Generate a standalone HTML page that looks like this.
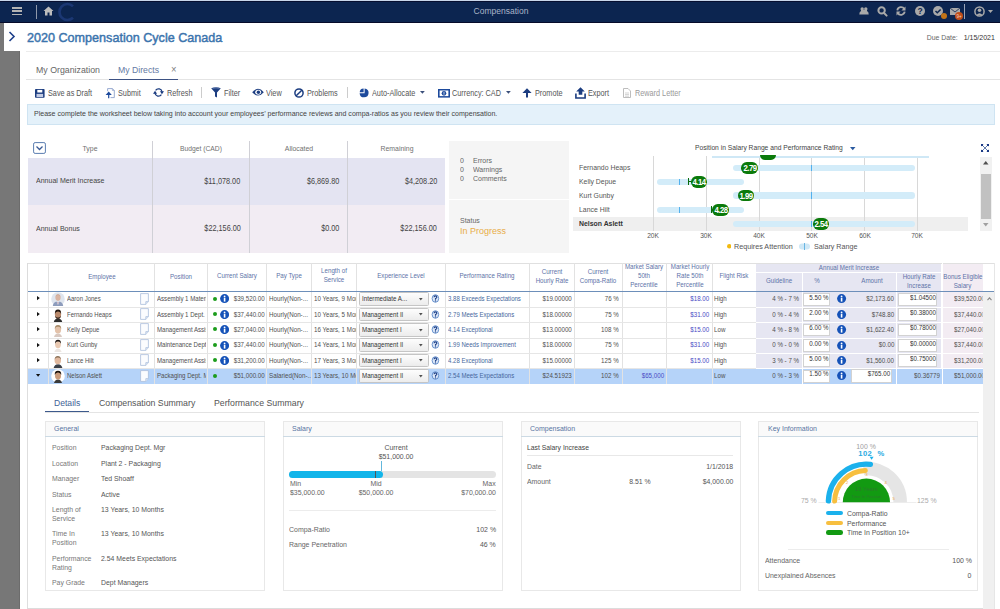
<!DOCTYPE html>
<html><head><meta charset="utf-8"><style>
html,body{margin:0;padding:0;}
body{width:1000px;height:609px;overflow:hidden;position:relative;background:#fff;font-family:"Liberation Sans",sans-serif;}
.t{position:absolute;white-space:nowrap;-webkit-font-smoothing:antialiased;}
.r{position:absolute;}
</style></head><body>
<div class="r" style="left:0.00px;top:0.00px;width:1000.00px;height:1.00px;background:#c9d6ea;"></div>
<div class="r" style="left:0.00px;top:1.00px;width:1000.00px;height:22.00px;background:#0c2550;"></div>
<div class="r" style="left:0.00px;top:1.00px;width:1000.00px;height:1.00px;background:#070f30;"></div>
<div class="r" style="left:0.00px;top:22.00px;width:1000.00px;height:1.00px;background:#060c2a;"></div>
<div class="r" style="left:12.00px;top:7.00px;width:10.00px;height:1.50px;background:#b4b4b4;"></div>
<div class="r" style="left:12.00px;top:10.30px;width:10.00px;height:1.50px;background:#b4b4b4;"></div>
<div class="r" style="left:12.00px;top:13.60px;width:10.00px;height:1.50px;background:#b4b4b4;"></div>
<div class="r" style="left:36.00px;top:4.50px;width:1.00px;height:14.00px;background:#8f98aa;"></div>
<svg class="r" style="left:43px;top:6px;width:11px;height:10px" viewBox="0 0 11 10"><path d="M5.5 0.5 L0.5 5 H2 V9.5 H4.5 V6.5 H6.5 V9.5 H9 V5 H10.5 Z" fill="#bdbdbd"/></svg>
<svg class="r" style="left:57px;top:2px;width:20px;height:20px" viewBox="0 0 20 20"><path d="M16 4.2 A8 8 0 1 0 16 15.8" fill="none" stroke="#1b3773" stroke-width="2.7"/></svg>
<div class="t" style="top:6.00px;font-size:9.520px;line-height:10px;color:#a9b4c8;left:350.60px;width:300px;text-align:center;transform:scaleX(0.8929);transform-origin:50% 0;">Compensation</div>
<svg class="r" style="left:859px;top:7px;width:10px;height:8px" viewBox="0 0 10 8"><circle cx="3.2" cy="2" r="1.7" fill="#a9a9a9"/><circle cx="6.8" cy="2" r="1.7" fill="#a9a9a9"/><path d="M0.3 7.6 Q0.2 4.6 2 4 H8 Q9.8 4.6 9.7 7.6 Z" fill="#a9a9a9"/><rect x="2" y="3" width="6" height="2" fill="#a9a9a9"/></svg>
<svg class="r" style="left:877px;top:6px;width:11px;height:11px" viewBox="0 0 11 11"><circle cx="4.6" cy="4.4" r="3.2" fill="none" stroke="#a9a9a9" stroke-width="2"/><path d="M6.8 6.8 L9.6 9.6" stroke="#a9a9a9" stroke-width="2" stroke-linecap="round"/></svg>
<svg class="r" style="left:896px;top:6px;width:10px;height:10px" viewBox="0 0 10 10"><path d="M1.3 4.3 A3.8 3.8 0 0 1 8.3 3" fill="none" stroke="#a9a9a9" stroke-width="1.8"/><path d="M9.5 0.5 V4.6 H5.4 Z" fill="#a9a9a9"/><path d="M8.7 5.7 A3.8 3.8 0 0 1 1.7 7" fill="none" stroke="#a9a9a9" stroke-width="1.8"/><path d="M0.5 9.5 V5.4 H4.6 Z" fill="#a9a9a9"/></svg>
<svg class="r" style="left:915px;top:6px;width:10px;height:10px" viewBox="0 0 10 10"><circle cx="5" cy="5" r="5" fill="#a9a9a9"/><text x="5" y="8.3" font-size="8.5" font-weight="700" text-anchor="middle" fill="#0c2550" font-family="Liberation Sans">?</text></svg>
<svg class="r" style="left:933px;top:6px;width:10px;height:10px" viewBox="0 0 10 10"><circle cx="5" cy="5" r="5" fill="#a9a9a9"/><path d="M2.5 5 L4.3 6.8 L7.6 3.4" fill="none" stroke="#0c2550" stroke-width="1.5"/></svg>
<svg class="r" style="left:940.5px;top:12.5px;width:6px;height:6px" viewBox="0 0 6 6"><circle cx="3" cy="3" r="3" fill="#c27418"/></svg>
<svg class="r" style="left:950px;top:8px;width:10px;height:7px" viewBox="0 0 10 7"><rect x="0" y="0" width="10" height="7" fill="#a9a9a9"/><path d="M0 0 L5 4 L10 0" fill="none" stroke="#0c2550" stroke-width="0.8"/></svg>
<svg class="r" style="left:955px;top:12px;width:8px;height:8px" viewBox="0 0 8 8"><circle cx="4" cy="4" r="4" fill="#bf4d1a"/><text x="4" y="5.8" font-size="4.5" text-anchor="middle" fill="#f0d0c0" font-family="Liberation Sans">9+</text></svg>
<div class="r" style="left:964.00px;top:4.00px;width:1.00px;height:15.00px;background:#9aa3b5;"></div>
<svg class="r" style="left:973.5px;top:6px;width:11px;height:11px" viewBox="0 0 11 11"><circle cx="5.5" cy="5.5" r="4.6" fill="none" stroke="#a9a9a9" stroke-width="1.5"/><circle cx="5.5" cy="4.3" r="1.8" fill="#a9a9a9"/><path d="M2.5 9 Q5.5 5.5 8.5 9" fill="#a9a9a9"/></svg>
<svg class="r" style="left:988px;top:10px;width:5px;height:4px" viewBox="0 0 5 4"><path d="M0 0 H5 L2.5 3 Z" fill="#a9a9a9"/></svg>
<div class="r" style="left:0.00px;top:23.00px;width:20.00px;height:586.00px;background:#777777;"></div>
<div class="r" style="left:19.00px;top:23.00px;width:1.00px;height:586.00px;background:#6c6c6c;"></div>
<div class="r" style="left:4.00px;top:23.00px;width:16.00px;height:28.00px;background:#ffffff;"></div>
<svg class="r" style="left:8px;top:31px;width:8px;height:11px" viewBox="0 0 8 11"><path d="M1.5 1 L6 5.5 L1.5 10" fill="none" stroke="#1d3f8a" stroke-width="1.6"/></svg>
<div class="t" style="top:30.00px;font-size:12.600px;line-height:16px;color:#3b74ad;left:27.00px;-webkit-text-stroke:0.45px #3b74ad;">2020 Compensation Cycle Canada</div>
<div class="t" style="top:33.00px;font-size:7.728px;line-height:10px;color:#666;right:42.50px;text-align:right;transform:scaleX(0.8929);transform-origin:100% 0;">Due Date:</div>
<div class="t" style="top:33.00px;font-size:7.840px;line-height:10px;color:#333;right:5.00px;text-align:right;transform:scaleX(0.8929);transform-origin:100% 0;">1/15/2021</div>
<div class="r" style="left:26.00px;top:51.00px;width:974.00px;height:1.00px;background:#ececec;"></div>
<div class="t" style="top:64.00px;font-size:9.856px;line-height:12px;color:#666;left:36.00px;transform:scaleX(0.8929);transform-origin:0 0;">My Organization</div>
<div class="t" style="top:64.00px;font-size:9.744px;line-height:12px;color:#6479a3;left:118.00px;transform:scaleX(0.8929);transform-origin:0 0;">My Directs</div>
<div class="t" style="top:64.00px;font-size:10.640px;line-height:10px;color:#808080;left:170.50px;transform:scaleX(0.8929);transform-origin:0 0;">×</div>
<div class="r" style="left:26.00px;top:79.40px;width:974.00px;height:1.00px;background:#e4e4e4;"></div>
<div class="r" style="left:109.00px;top:78.60px;width:69.00px;height:1.60px;background:#3d5283;"></div>
<svg class="r" style="left:35px;top:88.5px;width:10px;height:9px" viewBox="0 0 10 9"><rect x="0" y="0" width="9.6" height="8.8" rx="0.8" fill="#1c3d80"/><rect x="2.3" y="0.9" width="5" height="2.6" fill="#fff"/><rect x="1.5" y="4.9" width="6.6" height="3.1" fill="#c3cce4"/></svg>
<div class="t" style="top:89.00px;font-size:8.176px;line-height:10px;color:#555;left:48.00px;transform:scaleX(0.8929);transform-origin:0 0;">Save as Draft</div>
<svg class="r" style="left:104.5px;top:87.8px;width:11px;height:11px" viewBox="0 0 11 11"><path d="M2.6 3.2 V0.6 H7.4 L9.3 2.5 V9.6 H5.5" fill="#fff" stroke="#7f96c4" stroke-width="0.8"/><path d="M7.4 0.6 V2.5 H9.3" fill="none" stroke="#7f96c4" stroke-width="0.6"/><path d="M3.1 10.2 V6.9 H0.6 L3.7 3.6 L6.8 6.9 H4.3 V10.2 Z" fill="#1d4a9c"/></svg>
<div class="t" style="top:89.00px;font-size:8.176px;line-height:10px;color:#555;left:118.00px;transform:scaleX(0.8929);transform-origin:0 0;">Submit</div>
<svg class="r" style="left:153.3px;top:88.3px;width:11px;height:9px" viewBox="0 0 11 9"><path d="M2.6 2.4 A3.6 3.6 0 0 1 9.1 4.0" fill="none" stroke="#1c3d80" stroke-width="1.3"/><path d="M6.9 3.3 H11 L8.95 6.2 Z" fill="#1c3d80"/><path d="M8.4 6.6 A3.6 3.6 0 0 1 1.9 5.0" fill="none" stroke="#1c3d80" stroke-width="1.3"/><path d="M0 5.7 H4.1 L2.05 2.8 Z" fill="#1c3d80"/></svg>
<div class="t" style="top:89.00px;font-size:8.176px;line-height:10px;color:#555;left:167.00px;transform:scaleX(0.8929);transform-origin:0 0;">Refresh</div>
<div class="r" style="left:201.00px;top:87.00px;width:1.00px;height:11.00px;background:#cccccc;"></div>
<svg class="r" style="left:210.8px;top:87.3px;width:10px;height:11px" viewBox="0 0 10 11"><path d="M0.2 1.2 Q5 -0.6 9.8 1.2 L6 5.6 V10.6 L4 9.4 V5.6 Z" fill="#1c3d80"/><path d="M1.6 1.4 Q5 0.5 8.4 1.4" fill="none" stroke="#7f96c4" stroke-width="0.6"/></svg>
<div class="t" style="top:89.00px;font-size:8.176px;line-height:10px;color:#555;left:224.00px;transform:scaleX(0.8929);transform-origin:0 0;">Filter</div>
<svg class="r" style="left:251.5px;top:88.3px;width:12px;height:8.4px" viewBox="0 0 12 8.4"><path d="M0.2 4.2 Q6 -2.6 11.8 4.2 Q6 11 0.2 4.2 Z" fill="#1c3d80"/><ellipse cx="6.2" cy="4.2" rx="3" ry="2.5" fill="#fff"/><circle cx="6.4" cy="4.2" r="1.7" fill="#1c3d80"/></svg>
<div class="t" style="top:89.00px;font-size:8.176px;line-height:10px;color:#555;left:266.00px;transform:scaleX(0.8929);transform-origin:0 0;">View</div>
<svg class="r" style="left:294px;top:87.5px;width:10px;height:10px" viewBox="0 0 10 10"><circle cx="5" cy="5" r="4.1" fill="none" stroke="#1c3d80" stroke-width="1.5"/><path d="M2.2 7.8 L7.8 2.2" stroke="#1c3d80" stroke-width="1.5"/></svg>
<div class="t" style="top:89.00px;font-size:8.176px;line-height:10px;color:#555;left:307.00px;transform:scaleX(0.8929);transform-origin:0 0;">Problems</div>
<div class="r" style="left:347.00px;top:87.00px;width:1.00px;height:11.00px;background:#cccccc;"></div>
<svg class="r" style="left:358.5px;top:87.8px;width:10px;height:10px" viewBox="0 0 10 10"><path d="M5.6 0.4 A4.5 4.5 0 1 1 0.6 5.2 H5.6 Z" fill="#1d4a9c"/><path d="M4.6 0.4 V4.3 H0.7 A4 4 0 0 1 4.6 0.4 Z" fill="#1d4a9c"/></svg>
<div class="t" style="top:89.00px;font-size:8.176px;line-height:10px;color:#555;left:372.00px;transform:scaleX(0.8929);transform-origin:0 0;">Auto-Allocate</div>
<svg class="r" style="left:420px;top:91px;width:5px;height:3px" viewBox="0 0 5 3"><path d="M0 0 H4.8 L2.4 2.7 Z" fill="#3a4f7a"/></svg>
<svg class="r" style="left:437.5px;top:88.5px;width:12px;height:9px" viewBox="0 0 12 9"><rect x="0" y="0" width="12" height="8.6" fill="#1d4a9c"/><rect x="1.6" y="1.5" width="8.8" height="5.6" fill="#fff"/><ellipse cx="6" cy="4.3" rx="2.3" ry="2.4" fill="#1d4a9c"/><path d="M6 2.9 V5.7" stroke="#fff" stroke-width="0.7"/></svg>
<div class="t" style="top:89.00px;font-size:8.176px;line-height:10px;color:#555;left:452.00px;transform:scaleX(0.8929);transform-origin:0 0;">Currency: CAD</div>
<svg class="r" style="left:506px;top:91px;width:5px;height:3px" viewBox="0 0 5 3"><path d="M0 0 H4.8 L2.4 2.7 Z" fill="#3a4f7a"/></svg>
<svg class="r" style="left:522px;top:88px;width:10px;height:10px" viewBox="0 0 10 10"><path d="M5 0.3 L9.6 5 H6 V9.6 H4 V5 H0.4 Z" fill="#1c3d80"/></svg>
<div class="t" style="top:89.00px;font-size:8.176px;line-height:10px;color:#555;left:535.00px;transform:scaleX(0.8929);transform-origin:0 0;">Promote</div>
<svg class="r" style="left:574.5px;top:87px;width:11px;height:12px" viewBox="0 0 11 12"><path d="M5.5 0.2 L9.8 4.6 H7.3 V7.8 H3.7 V4.6 H1.2 Z" fill="#1c3d80"/><path d="M0.9 6.6 V11 H10.1 V6.6" fill="none" stroke="#1c3d80" stroke-width="1.6"/></svg>
<div class="t" style="top:89.00px;font-size:8.176px;line-height:10px;color:#555;left:588.00px;transform:scaleX(0.8929);transform-origin:0 0;">Export</div>
<svg class="r" style="left:623px;top:87.5px;width:8px;height:10px" viewBox="0 0 8 10"><path d="M0.5 0.5 H5 L7.5 3 V9.5 H0.5 Z" fill="none" stroke="#b5b5b5" stroke-width="0.9"/><path d="M2 5 H6 M2 6.6 H6 M2 8.2 H6" stroke="#b5b5b5" stroke-width="0.6"/></svg>
<div class="t" style="top:89.00px;font-size:8.176px;line-height:10px;color:#999;left:635.00px;transform:scaleX(0.8929);transform-origin:0 0;">Reward Letter</div>
<div class="r" style="left:27.00px;top:103.50px;width:968.00px;height:21.50px;background:#e4f1fa;box-sizing:border-box;border:1px solid #cfe4f2;"></div>
<div class="t" style="top:109.00px;font-size:7.896px;line-height:10px;color:#444;left:33.70px;transform:scaleX(0.8929);transform-origin:0 0;">Please complete the worksheet below taking into account your employees’ performance reviews and compa-ratios as you review their compensation.</div>
<div class="r" style="left:28.00px;top:157.70px;width:417.30px;height:47.40px;background:#e4e4f2;"></div>
<div class="r" style="left:28.00px;top:205.10px;width:417.30px;height:47.60px;background:#f2ecf3;"></div>
<div class="r" style="left:152.00px;top:140.70px;width:1.00px;height:112.00px;background:#d0d0d6;"></div>
<div class="r" style="left:249.00px;top:140.70px;width:1.00px;height:112.00px;background:#d0d0d6;"></div>
<div class="r" style="left:347.00px;top:140.70px;width:1.00px;height:112.00px;background:#d0d0d6;"></div>
<svg class="r" style="left:32.5px;top:142px;width:13px;height:12px" viewBox="0 0 13 12"><rect x="0.6" y="0.6" width="11.8" height="10.8" rx="1.5" fill="#fff" stroke="#5a7db0" stroke-width="1"/><path d="M3.5 4.5 L6.5 7.5 L9.5 4.5" fill="none" stroke="#3a5a95" stroke-width="1.3"/></svg>
<div class="t" style="top:144.00px;font-size:7.728px;line-height:10px;color:#707070;left:-60.00px;width:300px;text-align:center;transform:scaleX(0.8929);transform-origin:50% 0;">Type</div>
<div class="t" style="top:144.00px;font-size:7.560px;line-height:10px;color:#707070;left:51.00px;width:300px;text-align:center;transform:scaleX(0.8929);transform-origin:50% 0;">Budget (CAD)</div>
<div class="t" style="top:144.00px;font-size:7.728px;line-height:10px;color:#707070;left:148.50px;width:300px;text-align:center;transform:scaleX(0.8929);transform-origin:50% 0;">Allocated</div>
<div class="t" style="top:144.00px;font-size:7.728px;line-height:10px;color:#707070;left:246.50px;width:300px;text-align:center;transform:scaleX(0.8929);transform-origin:50% 0;">Remaining</div>
<div class="t" style="top:176.00px;font-size:7.907px;line-height:10px;color:#444;left:36.30px;transform:scaleX(0.8929);transform-origin:0 0;">Annual Merit Increase</div>
<div class="t" style="top:224.00px;font-size:7.907px;line-height:10px;color:#444;left:36.30px;transform:scaleX(0.8929);transform-origin:0 0;">Annual Bonus</div>
<div class="t" style="top:177.00px;font-size:8.176px;line-height:10px;color:#444;right:759.30px;text-align:right;transform:scaleX(0.8929);transform-origin:100% 0;">$11,078.00</div>
<div class="t" style="top:177.00px;font-size:8.176px;line-height:10px;color:#444;right:661.00px;text-align:right;transform:scaleX(0.8929);transform-origin:100% 0;">$6,869.80</div>
<div class="t" style="top:177.00px;font-size:8.176px;line-height:10px;color:#444;right:563.20px;text-align:right;transform:scaleX(0.8929);transform-origin:100% 0;">$4,208.20</div>
<div class="t" style="top:224.00px;font-size:8.176px;line-height:10px;color:#444;right:759.30px;text-align:right;transform:scaleX(0.8929);transform-origin:100% 0;">$22,156.00</div>
<div class="t" style="top:224.00px;font-size:8.176px;line-height:10px;color:#444;right:661.00px;text-align:right;transform:scaleX(0.8929);transform-origin:100% 0;">$0.00</div>
<div class="t" style="top:224.00px;font-size:8.176px;line-height:10px;color:#444;right:563.20px;text-align:right;transform:scaleX(0.8929);transform-origin:100% 0;">$22,156.00</div>
<div class="r" style="left:449.20px;top:141.00px;width:120.10px;height:57.50px;background:#f5f5f5;"></div>
<div class="r" style="left:449.20px;top:200.00px;width:120.10px;height:52.70px;background:#f5f5f5;"></div>
<div class="t" style="top:156.00px;font-size:7.840px;line-height:10px;color:#666;left:460.00px;transform:scaleX(0.8929);transform-origin:0 0;">0</div>
<div class="t" style="top:156.00px;font-size:7.840px;line-height:10px;color:#666;left:473.00px;transform:scaleX(0.8929);transform-origin:0 0;">Errors</div>
<div class="t" style="top:165.00px;font-size:7.840px;line-height:10px;color:#666;left:460.00px;transform:scaleX(0.8929);transform-origin:0 0;">0</div>
<div class="t" style="top:165.00px;font-size:7.840px;line-height:10px;color:#666;left:473.00px;transform:scaleX(0.8929);transform-origin:0 0;">Warnings</div>
<div class="t" style="top:174.00px;font-size:7.840px;line-height:10px;color:#666;left:460.00px;transform:scaleX(0.8929);transform-origin:0 0;">0</div>
<div class="t" style="top:174.00px;font-size:7.840px;line-height:10px;color:#666;left:473.00px;transform:scaleX(0.8929);transform-origin:0 0;">Comments</div>
<div class="t" style="top:216.00px;font-size:7.840px;line-height:10px;color:#666;left:460.00px;transform:scaleX(0.8929);transform-origin:0 0;">Status</div>
<div class="t" style="top:226.00px;font-size:9.360px;line-height:10px;color:#e8ad48;left:460.00px;transform:scaleX(0.9615);transform-origin:0 0;">In Progress</div>
<div class="t" style="top:143.00px;font-size:7.504px;line-height:10px;color:#444;left:695.00px;transform:scaleX(0.8929);transform-origin:0 0;">Position in Salary Range and Performance Rating</div>
<svg class="r" style="left:850px;top:146.5px;width:6px;height:4px" viewBox="0 0 6 4"><path d="M0 0 H5.5 L2.75 3.2 Z" fill="#2a5aa0"/></svg>
<svg class="r" style="left:981px;top:143.8px;width:8px;height:8px" viewBox="0 0 8 8"><path d="M1 1 L7 7 M7 1 L1 7" stroke="#3a5a9a" stroke-width="0.8"/><path d="M0 0 H2.6 L0 2.6 Z M8 0 H5.4 L8 2.6 Z M0 8 H2.6 L0 5.4 Z M8 8 H5.4 L8 5.4 Z" fill="#1a3a85"/><rect x="0" y="0" width="2" height="2" fill="#1a3a85"/><rect x="6" y="0" width="2" height="2" fill="#1a3a85"/><rect x="0" y="6" width="2" height="2" fill="#1a3a85"/><rect x="6" y="6" width="2" height="2" fill="#1a3a85"/></svg>
<div class="r" style="left:572.80px;top:217.00px;width:395.20px;height:13.80px;background:#efefef;"></div>
<div class="r" style="left:652.90px;top:155.50px;width:1.00px;height:75.30px;background:#d8d8d8;"></div>
<div class="t" style="top:231.00px;font-size:7.392px;line-height:10px;color:#555;left:633.40px;width:40px;text-align:center;transform:scaleX(0.8929);transform-origin:50% 0;">20K</div>
<div class="r" style="left:705.70px;top:155.50px;width:1.00px;height:75.30px;background:#d8d8d8;"></div>
<div class="t" style="top:231.00px;font-size:7.392px;line-height:10px;color:#555;left:686.20px;width:40px;text-align:center;transform:scaleX(0.8929);transform-origin:50% 0;">30K</div>
<div class="r" style="left:758.50px;top:155.50px;width:1.00px;height:75.30px;background:#d8d8d8;"></div>
<div class="t" style="top:231.00px;font-size:7.392px;line-height:10px;color:#555;left:739.00px;width:40px;text-align:center;transform:scaleX(0.8929);transform-origin:50% 0;">40K</div>
<div class="r" style="left:811.30px;top:155.50px;width:1.00px;height:75.30px;background:#d8d8d8;"></div>
<div class="t" style="top:231.00px;font-size:7.392px;line-height:10px;color:#555;left:791.80px;width:40px;text-align:center;transform:scaleX(0.8929);transform-origin:50% 0;">50K</div>
<div class="r" style="left:864.10px;top:155.50px;width:1.00px;height:75.30px;background:#d8d8d8;"></div>
<div class="t" style="top:231.00px;font-size:7.392px;line-height:10px;color:#555;left:844.60px;width:40px;text-align:center;transform:scaleX(0.8929);transform-origin:50% 0;">60K</div>
<div class="r" style="left:916.90px;top:155.50px;width:1.00px;height:75.30px;background:#d8d8d8;"></div>
<div class="t" style="top:231.00px;font-size:7.392px;line-height:10px;color:#555;left:897.40px;width:40px;text-align:center;transform:scaleX(0.8929);transform-origin:50% 0;">70K</div>
<div class="r" style="left:712.00px;top:155.50px;width:217.00px;height:2.00px;background:#cfe8f6;"></div>
<div class="r" style="left:759.50px;top:155.00px;width:16.50px;height:4.50px;background:#0b7a0b;border-radius:0 0 7px 7px;"></div>
<div class="t" style="top:163.00px;font-size:7.728px;line-height:10px;color:#555;left:578.60px;transform:scaleX(0.8929);transform-origin:0 0;">Fernando Heaps</div>
<div class="t" style="top:177.00px;font-size:7.728px;line-height:10px;color:#555;left:578.60px;transform:scaleX(0.8929);transform-origin:0 0;">Kelly Depue</div>
<div class="t" style="top:191.00px;font-size:7.728px;line-height:10px;color:#555;left:578.60px;transform:scaleX(0.8929);transform-origin:0 0;">Kurt Gunby</div>
<div class="t" style="top:205.00px;font-size:7.728px;line-height:10px;color:#555;left:578.60px;transform:scaleX(0.8929);transform-origin:0 0;">Lance Hilt</div>
<div class="t" style="top:219.00px;font-size:7.728px;line-height:10px;color:#333;font-weight:700;left:578.60px;transform:scaleX(0.8929);transform-origin:0 0;">Nelson Aslett</div>
<div class="r" style="left:732.60px;top:164.65px;width:182.69px;height:6.50px;background:#d3ecf9;border-radius:3.25px;"></div>
<div class="r" style="left:811.30px;top:164.65px;width:1.00px;height:6.50px;background:#52b0ee;"></div>
<div class="r" style="left:741.20px;top:162.10px;width:16.60px;height:11.60px;background:#0b7a0b;border-radius:5.8px;"></div>
<div class="t" style="top:163.00px;font-size:8.736px;line-height:10px;color:#fff;font-weight:700;letter-spacing:-0.560px;left:734.50px;width:30px;text-align:center;transform:scaleX(0.8929);transform-origin:50% 0;">2.79</div>
<div class="r" style="left:656.57px;top:178.65px;width:87.65px;height:6.50px;background:#d3ecf9;border-radius:3.25px;"></div>
<div class="r" style="left:679.30px;top:178.65px;width:1.00px;height:6.50px;background:#52b0ee;"></div>
<div class="r" style="left:688.00px;top:178.40px;width:1.00px;height:7.00px;background:#0b6b0b;"></div>
<div class="r" style="left:688.00px;top:181.40px;width:5.00px;height:1.00px;background:#0b6b0b;"></div>
<div class="r" style="left:690.70px;top:176.10px;width:16.60px;height:11.60px;background:#0b7a0b;border-radius:5.8px;"></div>
<div class="t" style="top:177.00px;font-size:8.736px;line-height:10px;color:#fff;font-weight:700;letter-spacing:-0.560px;left:684.00px;width:30px;text-align:center;transform:scaleX(0.8929);transform-origin:50% 0;">4.14</div>
<div class="r" style="left:732.60px;top:192.45px;width:182.69px;height:6.50px;background:#d3ecf9;border-radius:3.25px;"></div>
<div class="r" style="left:811.30px;top:192.45px;width:1.00px;height:6.50px;background:#52b0ee;"></div>
<div class="r" style="left:737.70px;top:189.90px;width:16.60px;height:11.60px;background:#0b7a0b;border-radius:5.8px;"></div>
<div class="t" style="top:191.00px;font-size:8.736px;line-height:10px;color:#fff;font-weight:700;letter-spacing:-0.560px;left:731.00px;width:30px;text-align:center;transform:scaleX(0.8929);transform-origin:50% 0;">1.99</div>
<div class="r" style="left:656.57px;top:206.55px;width:87.65px;height:6.50px;background:#d3ecf9;border-radius:3.25px;"></div>
<div class="r" style="left:679.30px;top:206.55px;width:1.00px;height:6.50px;background:#52b0ee;"></div>
<div class="r" style="left:711.00px;top:206.30px;width:1.00px;height:7.00px;background:#0b6b0b;"></div>
<div class="r" style="left:711.00px;top:209.30px;width:3.70px;height:1.00px;background:#0b6b0b;"></div>
<div class="r" style="left:712.40px;top:204.00px;width:16.60px;height:11.60px;background:#0b7a0b;border-radius:5.8px;"></div>
<div class="t" style="top:205.00px;font-size:8.736px;line-height:10px;color:#fff;font-weight:700;letter-spacing:-0.560px;left:705.70px;width:30px;text-align:center;transform:scaleX(0.8929);transform-origin:50% 0;">4.28</div>
<div class="r" style="left:732.60px;top:220.75px;width:182.69px;height:6.50px;background:#d3ecf9;border-radius:3.25px;"></div>
<div class="r" style="left:811.30px;top:220.75px;width:1.00px;height:6.50px;background:#52b0ee;"></div>
<div class="r" style="left:812.70px;top:218.20px;width:16.60px;height:11.60px;background:#0b7a0b;border-radius:5.8px;"></div>
<div class="t" style="top:219.00px;font-size:8.736px;line-height:10px;color:#fff;font-weight:700;letter-spacing:-0.560px;left:806.00px;width:30px;text-align:center;transform:scaleX(0.8929);transform-origin:50% 0;">2.54</div>
<svg class="r" style="left:726.5px;top:244px;width:4.5px;height:4.5px" viewBox="0 0 4.5 4.5"><circle cx="2.25" cy="2.25" r="2.2" fill="#f2b90f"/></svg>
<div class="t" style="top:242.00px;font-size:8.064px;line-height:10px;color:#555;left:733.50px;transform:scaleX(0.8929);transform-origin:0 0;">Requires Attention</div>
<svg class="r" style="left:799px;top:242.5px;width:11px;height:7px" viewBox="0 0 11 7"><rect x="0" y="0.5" width="11" height="6" rx="3" fill="#cfe8f6"/><rect x="5" y="0" width="1" height="7" fill="#69b6e3"/></svg>
<div class="t" style="top:242.00px;font-size:8.064px;line-height:10px;color:#555;left:813.50px;transform:scaleX(0.8929);transform-origin:0 0;">Salary Range</div>
<div class="r" style="left:980.00px;top:157.00px;width:11.50px;height:73.80px;background:#f1f1f1;"></div>
<div class="r" style="left:981.00px;top:174.00px;width:9.50px;height:45.00px;background:#c1c1c1;"></div>
<svg class="r" style="left:983px;top:160.5px;width:6px;height:4px" viewBox="0 0 6 4"><path d="M0 3.5 H5.5 L2.75 0 Z" fill="#505050"/></svg>
<svg class="r" style="left:983px;top:222.5px;width:6px;height:4px" viewBox="0 0 6 4"><path d="M0 0 H5.5 L2.75 3.5 Z" fill="#a0a0a0"/></svg>
<div class="r" style="left:756.20px;top:263.40px;width:185.30px;height:120.60px;background:#e6e6f2;"></div>
<div class="r" style="left:941.50px;top:263.40px;width:41.50px;height:120.60px;background:#f3ecf3;"></div>
<div class="r" style="left:28.00px;top:368.40px;width:955.00px;height:15.60px;background:#b5d3f9;"></div>
<div class="r" style="left:28.00px;top:262.90px;width:967.00px;height:1.00px;background:#e0e0e0;"></div>
<div class="r" style="left:27.00px;top:263.40px;width:1.00px;height:120.60px;background:#dcdcdc;"></div>
<div class="r" style="left:48.00px;top:263.40px;width:1.00px;height:120.60px;background:#e2e2e2;"></div>
<div class="r" style="left:154.00px;top:263.40px;width:1.00px;height:120.60px;background:#e2e2e2;"></div>
<div class="r" style="left:207.00px;top:263.40px;width:1.00px;height:120.60px;background:#e2e2e2;"></div>
<div class="r" style="left:266.00px;top:263.40px;width:1.00px;height:120.60px;background:#e2e2e2;"></div>
<div class="r" style="left:311.00px;top:263.40px;width:1.00px;height:120.60px;background:#e2e2e2;"></div>
<div class="r" style="left:356.00px;top:263.40px;width:1.00px;height:120.60px;background:#e2e2e2;"></div>
<div class="r" style="left:445.00px;top:263.40px;width:1.00px;height:120.60px;background:#e2e2e2;"></div>
<div class="r" style="left:529.00px;top:263.40px;width:1.00px;height:120.60px;background:#e2e2e2;"></div>
<div class="r" style="left:574.00px;top:263.40px;width:1.00px;height:120.60px;background:#e2e2e2;"></div>
<div class="r" style="left:622.00px;top:263.40px;width:1.00px;height:120.60px;background:#e2e2e2;"></div>
<div class="r" style="left:666.00px;top:263.40px;width:1.00px;height:120.60px;background:#e2e2e2;"></div>
<div class="r" style="left:712.00px;top:263.40px;width:1.00px;height:120.60px;background:#e2e2e2;"></div>
<div class="r" style="left:756.20px;top:272.30px;width:185.30px;height:1.00px;background:#ffffff;"></div>
<div class="r" style="left:801.70px;top:272.30px;width:1.00px;height:111.70px;background:#ffffff;"></div>
<div class="r" style="left:896.20px;top:272.30px;width:1.00px;height:111.70px;background:#ffffff;"></div>
<div class="r" style="left:941.50px;top:263.40px;width:1.00px;height:120.60px;background:#ffffff;"></div>
<div class="r" style="left:28.00px;top:307.00px;width:728.20px;height:1.00px;background:#e6e6e6;"></div>
<div class="r" style="left:756.20px;top:307.00px;width:226.80px;height:1.00px;background:#ffffff;"></div>
<div class="r" style="left:28.00px;top:322.40px;width:728.20px;height:1.00px;background:#e6e6e6;"></div>
<div class="r" style="left:756.20px;top:322.40px;width:226.80px;height:1.00px;background:#ffffff;"></div>
<div class="r" style="left:28.00px;top:337.70px;width:728.20px;height:1.00px;background:#e6e6e6;"></div>
<div class="r" style="left:756.20px;top:337.70px;width:226.80px;height:1.00px;background:#ffffff;"></div>
<div class="r" style="left:28.00px;top:353.00px;width:728.20px;height:1.00px;background:#e6e6e6;"></div>
<div class="r" style="left:756.20px;top:353.00px;width:226.80px;height:1.00px;background:#ffffff;"></div>
<div class="r" style="left:28.00px;top:368.40px;width:728.20px;height:1.00px;background:#e6e6e6;"></div>
<div class="r" style="left:756.20px;top:368.40px;width:226.80px;height:1.00px;background:#ffffff;"></div>
<div class="r" style="left:28.00px;top:291.20px;width:967.00px;height:1.30px;background:#6d8fba;"></div>
<div class="t" style="top:272.00px;font-size:6.944px;line-height:10px;color:#5d73a8;left:51.50px;width:100px;text-align:center;transform:scaleX(0.8929);transform-origin:50% 0;">Employee</div>
<div class="t" style="top:272.00px;font-size:6.944px;line-height:10px;color:#5d73a8;left:156.00px;width:50px;text-align:center;transform:scaleX(0.8929);transform-origin:50% 0;">Position</div>
<div class="t" style="top:271.00px;font-size:6.944px;line-height:10px;color:#5d73a8;left:207.00px;width:60px;text-align:center;transform:scaleX(0.8929);transform-origin:50% 0;">Current Salary</div>
<div class="t" style="top:271.00px;font-size:6.944px;line-height:10px;color:#5d73a8;left:263.70px;width:50px;text-align:center;transform:scaleX(0.8929);transform-origin:50% 0;">Pay Type</div>
<div class="t" style="top:266.00px;font-size:6.944px;line-height:9px;color:#5d73a8;left:308.70px;width:50px;text-align:center;transform:scaleX(0.8929);transform-origin:50% 0;">Length of<br>Service</div>
<div class="t" style="top:271.00px;font-size:6.944px;line-height:10px;color:#5d73a8;left:360.60px;width:80px;text-align:center;transform:scaleX(0.8929);transform-origin:50% 0;">Experience Level</div>
<div class="t" style="top:271.00px;font-size:6.944px;line-height:10px;color:#5d73a8;left:447.30px;width:80px;text-align:center;transform:scaleX(0.8929);transform-origin:50% 0;">Performance Rating</div>
<div class="t" style="top:267.00px;font-size:6.944px;line-height:9px;color:#5d73a8;left:527.00px;width:50px;text-align:center;transform:scaleX(0.8929);transform-origin:50% 0;">Current<br>Hourly Rate</div>
<div class="t" style="top:267.00px;font-size:6.944px;line-height:9px;color:#5d73a8;left:573.20px;width:50px;text-align:center;transform:scaleX(0.8929);transform-origin:50% 0;">Current<br>Compa-Ratio</div>
<div class="t" style="top:262.00px;font-size:6.944px;line-height:9px;color:#5d73a8;left:619.40px;width:50px;text-align:center;transform:scaleX(0.8929);transform-origin:50% 0;">Market Salary<br>50th<br>Percentile</div>
<div class="t" style="top:262.00px;font-size:6.944px;line-height:9px;color:#5d73a8;left:664.50px;width:50px;text-align:center;transform:scaleX(0.8929);transform-origin:50% 0;">Market Hourly<br>Rate 50th<br>Percentile</div>
<div class="t" style="top:271.00px;font-size:6.944px;line-height:10px;color:#5d73a8;left:709.20px;width:50px;text-align:center;transform:scaleX(0.8929);transform-origin:50% 0;">Flight Risk</div>
<div class="t" style="top:263.00px;font-size:6.944px;line-height:10px;color:#5d73a8;left:789.00px;width:120px;text-align:center;transform:scaleX(0.8929);transform-origin:50% 0;">Annual Merit Increase</div>
<div class="t" style="top:276.00px;font-size:6.944px;line-height:10px;color:#5d73a8;left:754.00px;width:50px;text-align:center;transform:scaleX(0.8929);transform-origin:50% 0;">Guideline</div>
<div class="t" style="top:276.00px;font-size:6.944px;line-height:10px;color:#5d73a8;left:806.70px;width:20px;text-align:center;transform:scaleX(0.8929);transform-origin:50% 0;">%</div>
<div class="t" style="top:276.00px;font-size:6.944px;line-height:10px;color:#5d73a8;left:847.00px;width:50px;text-align:center;transform:scaleX(0.8929);transform-origin:50% 0;">Amount</div>
<div class="t" style="top:272.00px;font-size:6.944px;line-height:9px;color:#5d73a8;left:894.00px;width:50px;text-align:center;transform:scaleX(0.8929);transform-origin:50% 0;">Hourly Rate<br>Increase</div>
<div class="t" style="top:272.00px;font-size:6.944px;line-height:9px;color:#5d73a8;left:940.80px;width:43px;text-align:center;transform:scaleX(0.8929);transform-origin:50% 0;">Bonus Eligible<br>Salary</div>
<svg class="r" style="left:37px;top:296.45px;width:3px;height:5px" viewBox="0 0 3 5"><path d="M0 0 V4.2 L2.8 2.1 Z" fill="#111"/></svg>
<svg class="r" style="left:51px;top:292.05px;width:14px;height:14px" viewBox="0 0 14 14"><circle cx="7" cy="7" r="6.8" fill="#dfe5ee"/><path d="M1.8 14 Q2 9.6 7 9.4 Q12 9.6 12.2 14 Z" fill="#8d9cbc"/><path d="M5.6 9.4 L7 13 L8.4 9.4 Z" fill="#fff"/><path d="M6.6 10 L7 12.5 L7.4 10 Z" fill="#7a3050"/><ellipse cx="7" cy="5.6" rx="2.6" ry="3.3" fill="#d9b4a2"/><path d="M4.5 4.6 Q7 1.6 9.5 4.6 Q9 2.4 7 2.3 Q5 2.4 4.5 4.6 Z" fill="#c9a896"/></svg>
<div class="t" style="top:294.00px;font-size:6.720px;line-height:10px;color:#505050;left:67.40px;transform:scaleX(0.8929);transform-origin:0 0;">Aaron Jones</div>
<svg class="r" style="left:140px;top:292.55px;width:9px;height:12px" viewBox="0 0 9 12"><path d="M0.6 0.6 H8.4 V8.6 L5.8 11.4 H0.6 Z" fill="#fbfcfe" stroke="#a9bddb" stroke-width="0.8"/><path d="M5.8 11.4 V8.6 H8.4" fill="#dfe8f4" stroke="#a9bddb" stroke-width="0.7"/></svg>
<div class="t" style="top:294.00px;font-size:6.832px;line-height:10px;color:#505050;left:157.00px;width:55.44px;overflow:hidden;transform:scaleX(0.8929);transform-origin:0 0;">Assembly 1 Material Handler</div>
<div class="r" style="left:212.50px;top:296.55px;width:4.00px;height:4.00px;background:#1c9c1c;border-radius:50%;"></div>
<svg class="r" style="left:220px;top:294.45px;width:9.2px;height:9.2px" viewBox="0 0 9.2 9.2"><circle cx="4.6" cy="4.6" r="4.5" fill="#1552b8"/><circle cx="4.6" cy="2.4" r="0.9" fill="#fff"/><rect x="3.8" y="3.8" width="1.6" height="3.8" fill="#fff"/></svg>
<div class="t" style="top:294.00px;font-size:6.944px;line-height:10px;color:#505050;right:735.50px;text-align:right;transform:scaleX(0.8929);transform-origin:100% 0;">$39,520.00</div>
<div class="t" style="top:294.00px;font-size:7.000px;line-height:10px;color:#505050;left:268.80px;width:47.04px;overflow:hidden;transform:scaleX(0.8929);transform-origin:0 0;">Hourly(Non-...</div>
<div class="t" style="top:294.00px;font-size:6.944px;line-height:10px;color:#505050;left:313.70px;width:47.49px;overflow:hidden;transform:scaleX(0.8929);transform-origin:0 0;">10 Years, 9 Months</div>
<div class="r" style="left:358.50px;top:292.10px;width:70.50px;height:14.00px;background:linear-gradient(#fdfdfd,#ececec);box-sizing:border-box;border:1px solid #c5c5c5;border-radius:1.5px;"></div>
<div class="t" style="top:294.00px;font-size:6.944px;line-height:10px;color:#333;left:362.00px;transform:scaleX(0.8929);transform-origin:0 0;">Intermediate A...</div>
<svg class="r" style="left:419.3px;top:297.75px;width:5px;height:3.5px" viewBox="0 0 5 3.5"><path d="M0 0 H3.6 L1.8 2.4 Z" fill="#505050"/></svg>
<svg class="r" style="left:431px;top:294.35px;width:9px;height:9px" viewBox="0 0 9 9"><ellipse cx="4.4" cy="4.5" rx="3.3" ry="3.8" fill="#dce8f8" stroke="#5a88c8" stroke-width="0.9"/><path d="M3.1 3.3 Q3.1 1.9 4.4 1.9 Q5.8 1.9 5.8 3.2 Q5.8 4.1 4.5 4.6 V5.7" fill="none" stroke="#1d3f86" stroke-width="1.1"/><circle cx="4.5" cy="6.9" r="0.65" fill="#1d3f86"/></svg>
<div class="t" style="top:294.00px;font-size:6.776px;line-height:10px;color:#46679c;left:448.00px;transform:scaleX(0.8929);transform-origin:0 0;">3.88 Exceeds Expectations</div>
<div class="t" style="top:294.00px;font-size:6.944px;line-height:10px;color:#505050;right:428.40px;text-align:right;transform:scaleX(0.8929);transform-origin:100% 0;">$19.00000</div>
<div class="t" style="top:294.00px;font-size:6.944px;line-height:10px;color:#505050;right:381.00px;text-align:right;transform:scaleX(0.8929);transform-origin:100% 0;">76 %</div>
<div class="t" style="top:294.00px;font-size:6.944px;line-height:10px;color:#4b4bc4;right:291.20px;text-align:right;transform:scaleX(0.8929);transform-origin:100% 0;">$18.00</div>
<div class="t" style="top:294.00px;font-size:6.944px;line-height:10px;color:#505050;left:714.20px;transform:scaleX(0.8929);transform-origin:0 0;">High</div>
<div class="t" style="top:294.00px;font-size:6.944px;line-height:10px;color:#505050;right:201.30px;text-align:right;transform:scaleX(0.8929);transform-origin:100% 0;">4 % - 7 %</div>
<div class="r" style="left:802.80px;top:292.80px;width:27.40px;height:12.90px;background:#fff;box-sizing:border-box;border:1px solid #d2d2d2;"></div>
<div class="t" style="top:293.00px;font-size:6.944px;line-height:10px;color:#333;right:171.60px;text-align:right;transform:scaleX(0.8929);transform-origin:100% 0;">5.50 %</div>
<svg class="r" style="left:837.4px;top:294.45px;width:9.2px;height:9.2px" viewBox="0 0 9.2 9.2"><circle cx="4.6" cy="4.6" r="4.5" fill="#1552b8"/><circle cx="4.6" cy="2.4" r="0.9" fill="#fff"/><rect x="3.8" y="3.8" width="1.6" height="3.8" fill="#fff"/></svg>
<div class="t" style="top:294.00px;font-size:6.944px;line-height:10px;color:#505050;right:106.00px;text-align:right;transform:scaleX(0.8929);transform-origin:100% 0;">$2,173.60</div>
<div class="r" style="left:898.00px;top:292.70px;width:39.20px;height:13.10px;background:#fff;box-sizing:border-box;border:1px solid #d2d2d2;"></div>
<div class="t" style="top:293.00px;font-size:6.944px;line-height:10px;color:#333;right:64.50px;text-align:right;transform:scaleX(0.8929);transform-origin:100% 0;">$1.04500</div>
<div class="t" style="top:294.00px;font-size:6.944px;line-height:10px;color:#505050;left:953.60px;width:32.03px;overflow:hidden;transform:scaleX(0.8929);transform-origin:0 0;">$39,520.00</div>
<svg class="r" style="left:37px;top:311.9px;width:3px;height:5px" viewBox="0 0 3 5"><path d="M0 0 V4.2 L2.8 2.1 Z" fill="#111"/></svg>
<svg class="r" style="left:51px;top:307.5px;width:14px;height:14px" viewBox="0 0 14 14"><path d="M2.8 14 Q3.5 10.6 7 10.4 Q10.5 10.6 11.2 14 Z" fill="#2e2e2e"/><ellipse cx="7" cy="6.6" rx="3.1" ry="4" fill="#b98a6c"/><path d="M3.9 6 Q3.6 1.6 7 1.6 Q10.4 1.6 10.1 6 Q9.6 3.4 7 3.5 Q4.4 3.4 3.9 6 Z" fill="#231710"/><path d="M4 7.8 Q4.6 11 7 11 Q9.4 11 10 7.8 Q9 9.6 7 9.4 Q5 9.6 4 7.8 Z" fill="#3a2a20"/></svg>
<div class="t" style="top:310.00px;font-size:6.720px;line-height:10px;color:#505050;left:67.40px;transform:scaleX(0.8929);transform-origin:0 0;">Fernando Heaps</div>
<svg class="r" style="left:140px;top:308.0px;width:9px;height:12px" viewBox="0 0 9 12"><path d="M0.6 0.6 H8.4 V8.6 L5.8 11.4 H0.6 Z" fill="#fbfcfe" stroke="#a9bddb" stroke-width="0.8"/><path d="M5.8 11.4 V8.6 H8.4" fill="#dfe8f4" stroke="#a9bddb" stroke-width="0.7"/></svg>
<div class="t" style="top:310.00px;font-size:6.832px;line-height:10px;color:#505050;left:157.00px;width:55.44px;overflow:hidden;transform:scaleX(0.8929);transform-origin:0 0;">Assembly 1 Dept. Mgr</div>
<div class="r" style="left:212.50px;top:312.00px;width:4.00px;height:4.00px;background:#1c9c1c;border-radius:50%;"></div>
<svg class="r" style="left:220px;top:309.9px;width:9.2px;height:9.2px" viewBox="0 0 9.2 9.2"><circle cx="4.6" cy="4.6" r="4.5" fill="#1552b8"/><circle cx="4.6" cy="2.4" r="0.9" fill="#fff"/><rect x="3.8" y="3.8" width="1.6" height="3.8" fill="#fff"/></svg>
<div class="t" style="top:310.00px;font-size:6.944px;line-height:10px;color:#505050;right:735.50px;text-align:right;transform:scaleX(0.8929);transform-origin:100% 0;">$37,440.00</div>
<div class="t" style="top:310.00px;font-size:7.000px;line-height:10px;color:#505050;left:268.80px;width:47.04px;overflow:hidden;transform:scaleX(0.8929);transform-origin:0 0;">Hourly(Non-...</div>
<div class="t" style="top:310.00px;font-size:6.944px;line-height:10px;color:#505050;left:313.70px;width:47.49px;overflow:hidden;transform:scaleX(0.8929);transform-origin:0 0;">10 Years, 5 Months</div>
<div class="r" style="left:358.50px;top:307.60px;width:70.50px;height:13.90px;background:linear-gradient(#fdfdfd,#ececec);box-sizing:border-box;border:1px solid #c5c5c5;border-radius:1.5px;"></div>
<div class="t" style="top:310.00px;font-size:6.944px;line-height:10px;color:#333;left:362.00px;transform:scaleX(0.8929);transform-origin:0 0;">Management II</div>
<svg class="r" style="left:419.3px;top:313.2px;width:5px;height:3.5px" viewBox="0 0 5 3.5"><path d="M0 0 H3.6 L1.8 2.4 Z" fill="#505050"/></svg>
<svg class="r" style="left:431px;top:309.8px;width:9px;height:9px" viewBox="0 0 9 9"><ellipse cx="4.4" cy="4.5" rx="3.3" ry="3.8" fill="#dce8f8" stroke="#5a88c8" stroke-width="0.9"/><path d="M3.1 3.3 Q3.1 1.9 4.4 1.9 Q5.8 1.9 5.8 3.2 Q5.8 4.1 4.5 4.6 V5.7" fill="none" stroke="#1d3f86" stroke-width="1.1"/><circle cx="4.5" cy="6.9" r="0.65" fill="#1d3f86"/></svg>
<div class="t" style="top:310.00px;font-size:6.776px;line-height:10px;color:#46679c;left:448.00px;transform:scaleX(0.8929);transform-origin:0 0;">2.79 Meets Expectations</div>
<div class="t" style="top:310.00px;font-size:6.944px;line-height:10px;color:#505050;right:428.40px;text-align:right;transform:scaleX(0.8929);transform-origin:100% 0;">$18.00000</div>
<div class="t" style="top:310.00px;font-size:6.944px;line-height:10px;color:#505050;right:381.00px;text-align:right;transform:scaleX(0.8929);transform-origin:100% 0;">75 %</div>
<div class="t" style="top:310.00px;font-size:6.944px;line-height:10px;color:#4b4bc4;right:291.20px;text-align:right;transform:scaleX(0.8929);transform-origin:100% 0;">$31.00</div>
<div class="t" style="top:310.00px;font-size:6.944px;line-height:10px;color:#505050;left:714.20px;transform:scaleX(0.8929);transform-origin:0 0;">High</div>
<div class="t" style="top:310.00px;font-size:6.944px;line-height:10px;color:#505050;right:201.30px;text-align:right;transform:scaleX(0.8929);transform-origin:100% 0;">0 % - 4 %</div>
<div class="r" style="left:802.80px;top:308.30px;width:27.40px;height:12.80px;background:#fff;box-sizing:border-box;border:1px solid #d2d2d2;"></div>
<div class="t" style="top:308.00px;font-size:6.944px;line-height:10px;color:#333;right:171.60px;text-align:right;transform:scaleX(0.8929);transform-origin:100% 0;">2.00 %</div>
<svg class="r" style="left:837.4px;top:309.9px;width:9.2px;height:9.2px" viewBox="0 0 9.2 9.2"><circle cx="4.6" cy="4.6" r="4.5" fill="#1552b8"/><circle cx="4.6" cy="2.4" r="0.9" fill="#fff"/><rect x="3.8" y="3.8" width="1.6" height="3.8" fill="#fff"/></svg>
<div class="t" style="top:310.00px;font-size:6.944px;line-height:10px;color:#505050;right:106.00px;text-align:right;transform:scaleX(0.8929);transform-origin:100% 0;">$748.80</div>
<div class="r" style="left:898.00px;top:308.20px;width:39.20px;height:13.00px;background:#fff;box-sizing:border-box;border:1px solid #d2d2d2;"></div>
<div class="t" style="top:308.00px;font-size:6.944px;line-height:10px;color:#333;right:64.50px;text-align:right;transform:scaleX(0.8929);transform-origin:100% 0;">$0.38000</div>
<div class="t" style="top:310.00px;font-size:6.944px;line-height:10px;color:#505050;left:953.60px;width:32.03px;overflow:hidden;transform:scaleX(0.8929);transform-origin:0 0;">$37,440.00</div>
<svg class="r" style="left:37px;top:327.24999999999994px;width:3px;height:5px" viewBox="0 0 3 5"><path d="M0 0 V4.2 L2.8 2.1 Z" fill="#111"/></svg>
<svg class="r" style="left:51px;top:322.84999999999997px;width:14px;height:14px" viewBox="0 0 14 14"><path d="M3 14 Q3.8 10.8 7 10.6 Q10.2 10.8 11 14 Z" fill="#d8c8c0"/><ellipse cx="7" cy="6.7" rx="3.1" ry="3.8" fill="#e3c2aa"/><path d="M3.8 6.2 Q3.6 2 7 2 Q10.4 2 10.2 6.2 Q9.4 3.6 7 3.8 Q4.6 3.6 3.8 6.2 Z" fill="#a78a68"/></svg>
<div class="t" style="top:325.00px;font-size:6.720px;line-height:10px;color:#505050;left:67.40px;transform:scaleX(0.8929);transform-origin:0 0;">Kelly Depue</div>
<svg class="r" style="left:140px;top:323.34999999999997px;width:9px;height:12px" viewBox="0 0 9 12"><path d="M0.6 0.6 H8.4 V8.6 L5.8 11.4 H0.6 Z" fill="#fbfcfe" stroke="#a9bddb" stroke-width="0.8"/><path d="M5.8 11.4 V8.6 H8.4" fill="#dfe8f4" stroke="#a9bddb" stroke-width="0.7"/></svg>
<div class="t" style="top:325.00px;font-size:6.832px;line-height:10px;color:#505050;left:157.00px;width:55.44px;overflow:hidden;transform:scaleX(0.8929);transform-origin:0 0;">Management Assistant</div>
<div class="r" style="left:212.50px;top:327.35px;width:4.00px;height:4.00px;background:#1c9c1c;border-radius:50%;"></div>
<svg class="r" style="left:220px;top:325.24999999999994px;width:9.2px;height:9.2px" viewBox="0 0 9.2 9.2"><circle cx="4.6" cy="4.6" r="4.5" fill="#1552b8"/><circle cx="4.6" cy="2.4" r="0.9" fill="#fff"/><rect x="3.8" y="3.8" width="1.6" height="3.8" fill="#fff"/></svg>
<div class="t" style="top:325.00px;font-size:6.944px;line-height:10px;color:#505050;right:735.50px;text-align:right;transform:scaleX(0.8929);transform-origin:100% 0;">$27,040.00</div>
<div class="t" style="top:325.00px;font-size:7.000px;line-height:10px;color:#505050;left:268.80px;width:47.04px;overflow:hidden;transform:scaleX(0.8929);transform-origin:0 0;">Hourly(Non-...</div>
<div class="t" style="top:325.00px;font-size:6.944px;line-height:10px;color:#505050;left:313.70px;width:47.49px;overflow:hidden;transform:scaleX(0.8929);transform-origin:0 0;">16 Years, 1 Months</div>
<div class="r" style="left:358.50px;top:323.00px;width:70.50px;height:13.80px;background:linear-gradient(#fdfdfd,#ececec);box-sizing:border-box;border:1px solid #c5c5c5;border-radius:1.5px;"></div>
<div class="t" style="top:325.00px;font-size:6.944px;line-height:10px;color:#333;left:362.00px;transform:scaleX(0.8929);transform-origin:0 0;">Management I</div>
<svg class="r" style="left:419.3px;top:328.54999999999995px;width:5px;height:3.5px" viewBox="0 0 5 3.5"><path d="M0 0 H3.6 L1.8 2.4 Z" fill="#505050"/></svg>
<svg class="r" style="left:431px;top:325.15px;width:9px;height:9px" viewBox="0 0 9 9"><ellipse cx="4.4" cy="4.5" rx="3.3" ry="3.8" fill="#dce8f8" stroke="#5a88c8" stroke-width="0.9"/><path d="M3.1 3.3 Q3.1 1.9 4.4 1.9 Q5.8 1.9 5.8 3.2 Q5.8 4.1 4.5 4.6 V5.7" fill="none" stroke="#1d3f86" stroke-width="1.1"/><circle cx="4.5" cy="6.9" r="0.65" fill="#1d3f86"/></svg>
<div class="t" style="top:325.00px;font-size:6.776px;line-height:10px;color:#46679c;left:448.00px;transform:scaleX(0.8929);transform-origin:0 0;">4.14 Exceptional</div>
<div class="t" style="top:325.00px;font-size:6.944px;line-height:10px;color:#505050;right:428.40px;text-align:right;transform:scaleX(0.8929);transform-origin:100% 0;">$13.00000</div>
<div class="t" style="top:325.00px;font-size:6.944px;line-height:10px;color:#505050;right:381.00px;text-align:right;transform:scaleX(0.8929);transform-origin:100% 0;">108 %</div>
<div class="t" style="top:325.00px;font-size:6.944px;line-height:10px;color:#4b4bc4;right:291.20px;text-align:right;transform:scaleX(0.8929);transform-origin:100% 0;">$15.00</div>
<div class="t" style="top:325.00px;font-size:6.944px;line-height:10px;color:#505050;left:714.20px;transform:scaleX(0.8929);transform-origin:0 0;">Low</div>
<div class="t" style="top:325.00px;font-size:6.944px;line-height:10px;color:#505050;right:201.30px;text-align:right;transform:scaleX(0.8929);transform-origin:100% 0;">4 % - 8 %</div>
<div class="r" style="left:802.80px;top:323.70px;width:27.40px;height:12.70px;background:#fff;box-sizing:border-box;border:1px solid #d2d2d2;"></div>
<div class="t" style="top:323.00px;font-size:6.944px;line-height:10px;color:#333;right:171.60px;text-align:right;transform:scaleX(0.8929);transform-origin:100% 0;">6.00 %</div>
<svg class="r" style="left:837.4px;top:325.24999999999994px;width:9.2px;height:9.2px" viewBox="0 0 9.2 9.2"><circle cx="4.6" cy="4.6" r="4.5" fill="#1552b8"/><circle cx="4.6" cy="2.4" r="0.9" fill="#fff"/><rect x="3.8" y="3.8" width="1.6" height="3.8" fill="#fff"/></svg>
<div class="t" style="top:325.00px;font-size:6.944px;line-height:10px;color:#505050;right:106.00px;text-align:right;transform:scaleX(0.8929);transform-origin:100% 0;">$1,622.40</div>
<div class="r" style="left:898.00px;top:323.60px;width:39.20px;height:12.90px;background:#fff;box-sizing:border-box;border:1px solid #d2d2d2;"></div>
<div class="t" style="top:323.00px;font-size:6.944px;line-height:10px;color:#333;right:64.50px;text-align:right;transform:scaleX(0.8929);transform-origin:100% 0;">$0.78000</div>
<div class="t" style="top:325.00px;font-size:6.944px;line-height:10px;color:#505050;left:953.60px;width:32.03px;overflow:hidden;transform:scaleX(0.8929);transform-origin:0 0;">$27,040.00</div>
<svg class="r" style="left:37px;top:342.55px;width:3px;height:5px" viewBox="0 0 3 5"><path d="M0 0 V4.2 L2.8 2.1 Z" fill="#111"/></svg>
<svg class="r" style="left:51px;top:338.15000000000003px;width:14px;height:14px" viewBox="0 0 14 14"><path d="M3.4 14 Q4 11 7 10.8 Q10 11 10.6 14 Z" fill="#ece6e2"/><ellipse cx="7" cy="6.6" rx="2.9" ry="3.7" fill="#e9c9b2"/><path d="M4 5.8 Q3.8 1.8 7 1.8 Q10.2 1.8 10 5.8 Q9.2 3.2 7 3.4 Q4.8 3.2 4 5.8 Z" fill="#1e1612"/></svg>
<div class="t" style="top:340.00px;font-size:6.720px;line-height:10px;color:#505050;left:67.40px;transform:scaleX(0.8929);transform-origin:0 0;">Kurt Gunby</div>
<svg class="r" style="left:140px;top:338.65000000000003px;width:9px;height:12px" viewBox="0 0 9 12"><path d="M0.6 0.6 H8.4 V8.6 L5.8 11.4 H0.6 Z" fill="#fbfcfe" stroke="#a9bddb" stroke-width="0.8"/><path d="M5.8 11.4 V8.6 H8.4" fill="#dfe8f4" stroke="#a9bddb" stroke-width="0.7"/></svg>
<div class="t" style="top:340.00px;font-size:6.832px;line-height:10px;color:#505050;left:157.00px;width:55.44px;overflow:hidden;transform:scaleX(0.8929);transform-origin:0 0;">Maintenance Dept Mgr</div>
<div class="r" style="left:212.50px;top:342.65px;width:4.00px;height:4.00px;background:#1c9c1c;border-radius:50%;"></div>
<svg class="r" style="left:220px;top:340.55px;width:9.2px;height:9.2px" viewBox="0 0 9.2 9.2"><circle cx="4.6" cy="4.6" r="4.5" fill="#1552b8"/><circle cx="4.6" cy="2.4" r="0.9" fill="#fff"/><rect x="3.8" y="3.8" width="1.6" height="3.8" fill="#fff"/></svg>
<div class="t" style="top:340.00px;font-size:6.944px;line-height:10px;color:#505050;right:735.50px;text-align:right;transform:scaleX(0.8929);transform-origin:100% 0;">$37,440.00</div>
<div class="t" style="top:340.00px;font-size:7.000px;line-height:10px;color:#505050;left:268.80px;width:47.04px;overflow:hidden;transform:scaleX(0.8929);transform-origin:0 0;">Hourly(Non-...</div>
<div class="t" style="top:340.00px;font-size:6.944px;line-height:10px;color:#505050;left:313.70px;width:47.49px;overflow:hidden;transform:scaleX(0.8929);transform-origin:0 0;">14 Years, 1 Months</div>
<div class="r" style="left:358.50px;top:338.30px;width:70.50px;height:13.80px;background:linear-gradient(#fdfdfd,#ececec);box-sizing:border-box;border:1px solid #c5c5c5;border-radius:1.5px;"></div>
<div class="t" style="top:340.00px;font-size:6.944px;line-height:10px;color:#333;left:362.00px;transform:scaleX(0.8929);transform-origin:0 0;">Management II</div>
<svg class="r" style="left:419.3px;top:343.85px;width:5px;height:3.5px" viewBox="0 0 5 3.5"><path d="M0 0 H3.6 L1.8 2.4 Z" fill="#505050"/></svg>
<svg class="r" style="left:431px;top:340.45000000000005px;width:9px;height:9px" viewBox="0 0 9 9"><ellipse cx="4.4" cy="4.5" rx="3.3" ry="3.8" fill="#dce8f8" stroke="#5a88c8" stroke-width="0.9"/><path d="M3.1 3.3 Q3.1 1.9 4.4 1.9 Q5.8 1.9 5.8 3.2 Q5.8 4.1 4.5 4.6 V5.7" fill="none" stroke="#1d3f86" stroke-width="1.1"/><circle cx="4.5" cy="6.9" r="0.65" fill="#1d3f86"/></svg>
<div class="t" style="top:340.00px;font-size:6.776px;line-height:10px;color:#46679c;left:448.00px;transform:scaleX(0.8929);transform-origin:0 0;">1.99 Needs Improvement</div>
<div class="t" style="top:340.00px;font-size:6.944px;line-height:10px;color:#505050;right:428.40px;text-align:right;transform:scaleX(0.8929);transform-origin:100% 0;">$18.00000</div>
<div class="t" style="top:340.00px;font-size:6.944px;line-height:10px;color:#505050;right:381.00px;text-align:right;transform:scaleX(0.8929);transform-origin:100% 0;">75 %</div>
<div class="t" style="top:340.00px;font-size:6.944px;line-height:10px;color:#4b4bc4;right:291.20px;text-align:right;transform:scaleX(0.8929);transform-origin:100% 0;">$31.00</div>
<div class="t" style="top:340.00px;font-size:6.944px;line-height:10px;color:#505050;left:714.20px;transform:scaleX(0.8929);transform-origin:0 0;">High</div>
<div class="t" style="top:340.00px;font-size:6.944px;line-height:10px;color:#505050;right:201.30px;text-align:right;transform:scaleX(0.8929);transform-origin:100% 0;">0 % - 0 %</div>
<div class="r" style="left:802.80px;top:339.00px;width:27.40px;height:12.70px;background:#fff;box-sizing:border-box;border:1px solid #d2d2d2;"></div>
<div class="t" style="top:339.00px;font-size:6.944px;line-height:10px;color:#333;right:171.60px;text-align:right;transform:scaleX(0.8929);transform-origin:100% 0;">0.00 %</div>
<svg class="r" style="left:837.4px;top:340.55px;width:9.2px;height:9.2px" viewBox="0 0 9.2 9.2"><circle cx="4.6" cy="4.6" r="4.5" fill="#1552b8"/><circle cx="4.6" cy="2.4" r="0.9" fill="#fff"/><rect x="3.8" y="3.8" width="1.6" height="3.8" fill="#fff"/></svg>
<div class="t" style="top:340.00px;font-size:6.944px;line-height:10px;color:#505050;right:106.00px;text-align:right;transform:scaleX(0.8929);transform-origin:100% 0;">$0.00</div>
<div class="r" style="left:898.00px;top:338.90px;width:39.20px;height:12.90px;background:#fff;box-sizing:border-box;border:1px solid #d2d2d2;"></div>
<div class="t" style="top:339.00px;font-size:6.944px;line-height:10px;color:#333;right:64.50px;text-align:right;transform:scaleX(0.8929);transform-origin:100% 0;">$0.00000</div>
<div class="t" style="top:340.00px;font-size:6.944px;line-height:10px;color:#505050;left:953.60px;width:32.03px;overflow:hidden;transform:scaleX(0.8929);transform-origin:0 0;">$37,440.00</div>
<svg class="r" style="left:37px;top:357.9px;width:3px;height:5px" viewBox="0 0 3 5"><path d="M0 0 V4.2 L2.8 2.1 Z" fill="#111"/></svg>
<svg class="r" style="left:51px;top:353.5px;width:14px;height:14px" viewBox="0 0 14 14"><path d="M2.6 14 Q3.4 10.4 7 10.2 Q10.6 10.4 11.4 14 Z" fill="#3a3f48"/><ellipse cx="6.8" cy="6.5" rx="3.2" ry="3.8" fill="#e0b89e"/><path d="M3.6 5.8 Q3.6 2 6.8 2 Q10 2 10 5.8 Q9.2 3.4 6.8 3.5 Q4.4 3.4 3.6 5.8 Z" fill="#8c7259"/></svg>
<div class="t" style="top:356.00px;font-size:6.720px;line-height:10px;color:#505050;left:67.40px;transform:scaleX(0.8929);transform-origin:0 0;">Lance Hilt</div>
<svg class="r" style="left:140px;top:354.0px;width:9px;height:12px" viewBox="0 0 9 12"><path d="M0.6 0.6 H8.4 V8.6 L5.8 11.4 H0.6 Z" fill="#fbfcfe" stroke="#a9bddb" stroke-width="0.8"/><path d="M5.8 11.4 V8.6 H8.4" fill="#dfe8f4" stroke="#a9bddb" stroke-width="0.7"/></svg>
<div class="t" style="top:356.00px;font-size:6.832px;line-height:10px;color:#505050;left:157.00px;width:55.44px;overflow:hidden;transform:scaleX(0.8929);transform-origin:0 0;">Management Assistant</div>
<div class="r" style="left:212.50px;top:358.00px;width:4.00px;height:4.00px;background:#1c9c1c;border-radius:50%;"></div>
<svg class="r" style="left:220px;top:355.9px;width:9.2px;height:9.2px" viewBox="0 0 9.2 9.2"><circle cx="4.6" cy="4.6" r="4.5" fill="#1552b8"/><circle cx="4.6" cy="2.4" r="0.9" fill="#fff"/><rect x="3.8" y="3.8" width="1.6" height="3.8" fill="#fff"/></svg>
<div class="t" style="top:356.00px;font-size:6.944px;line-height:10px;color:#505050;right:735.50px;text-align:right;transform:scaleX(0.8929);transform-origin:100% 0;">$31,200.00</div>
<div class="t" style="top:356.00px;font-size:7.000px;line-height:10px;color:#505050;left:268.80px;width:47.04px;overflow:hidden;transform:scaleX(0.8929);transform-origin:0 0;">Hourly(Non-...</div>
<div class="t" style="top:356.00px;font-size:6.944px;line-height:10px;color:#505050;left:313.70px;width:47.49px;overflow:hidden;transform:scaleX(0.8929);transform-origin:0 0;">17 Years, 3 Months</div>
<div class="r" style="left:358.50px;top:353.60px;width:70.50px;height:13.90px;background:linear-gradient(#fdfdfd,#ececec);box-sizing:border-box;border:1px solid #c5c5c5;border-radius:1.5px;"></div>
<div class="t" style="top:356.00px;font-size:6.944px;line-height:10px;color:#333;left:362.00px;transform:scaleX(0.8929);transform-origin:0 0;">Management I</div>
<svg class="r" style="left:419.3px;top:359.2px;width:5px;height:3.5px" viewBox="0 0 5 3.5"><path d="M0 0 H3.6 L1.8 2.4 Z" fill="#505050"/></svg>
<svg class="r" style="left:431px;top:355.8px;width:9px;height:9px" viewBox="0 0 9 9"><ellipse cx="4.4" cy="4.5" rx="3.3" ry="3.8" fill="#dce8f8" stroke="#5a88c8" stroke-width="0.9"/><path d="M3.1 3.3 Q3.1 1.9 4.4 1.9 Q5.8 1.9 5.8 3.2 Q5.8 4.1 4.5 4.6 V5.7" fill="none" stroke="#1d3f86" stroke-width="1.1"/><circle cx="4.5" cy="6.9" r="0.65" fill="#1d3f86"/></svg>
<div class="t" style="top:356.00px;font-size:6.776px;line-height:10px;color:#46679c;left:448.00px;transform:scaleX(0.8929);transform-origin:0 0;">4.28 Exceptional</div>
<div class="t" style="top:356.00px;font-size:6.944px;line-height:10px;color:#505050;right:428.40px;text-align:right;transform:scaleX(0.8929);transform-origin:100% 0;">$15.00000</div>
<div class="t" style="top:356.00px;font-size:6.944px;line-height:10px;color:#505050;right:381.00px;text-align:right;transform:scaleX(0.8929);transform-origin:100% 0;">125 %</div>
<div class="t" style="top:356.00px;font-size:6.944px;line-height:10px;color:#4b4bc4;right:291.20px;text-align:right;transform:scaleX(0.8929);transform-origin:100% 0;">$15.00</div>
<div class="t" style="top:356.00px;font-size:6.944px;line-height:10px;color:#505050;left:714.20px;transform:scaleX(0.8929);transform-origin:0 0;">High</div>
<div class="t" style="top:356.00px;font-size:6.944px;line-height:10px;color:#505050;right:201.30px;text-align:right;transform:scaleX(0.8929);transform-origin:100% 0;">3 % - 7 %</div>
<div class="r" style="left:802.80px;top:354.30px;width:27.40px;height:12.80px;background:#fff;box-sizing:border-box;border:1px solid #d2d2d2;"></div>
<div class="t" style="top:354.00px;font-size:6.944px;line-height:10px;color:#333;right:171.60px;text-align:right;transform:scaleX(0.8929);transform-origin:100% 0;">5.00 %</div>
<svg class="r" style="left:837.4px;top:355.9px;width:9.2px;height:9.2px" viewBox="0 0 9.2 9.2"><circle cx="4.6" cy="4.6" r="4.5" fill="#1552b8"/><circle cx="4.6" cy="2.4" r="0.9" fill="#fff"/><rect x="3.8" y="3.8" width="1.6" height="3.8" fill="#fff"/></svg>
<div class="t" style="top:356.00px;font-size:6.944px;line-height:10px;color:#505050;right:106.00px;text-align:right;transform:scaleX(0.8929);transform-origin:100% 0;">$1,560.00</div>
<div class="r" style="left:898.00px;top:354.20px;width:39.20px;height:13.00px;background:#fff;box-sizing:border-box;border:1px solid #d2d2d2;"></div>
<div class="t" style="top:354.00px;font-size:6.944px;line-height:10px;color:#333;right:64.50px;text-align:right;transform:scaleX(0.8929);transform-origin:100% 0;">$0.75000</div>
<div class="t" style="top:356.00px;font-size:6.944px;line-height:10px;color:#505050;left:953.60px;width:32.03px;overflow:hidden;transform:scaleX(0.8929);transform-origin:0 0;">$31,200.00</div>
<svg class="r" style="left:36px;top:374.2px;width:5px;height:3px" viewBox="0 0 5 3"><path d="M0 0 H4.2 L2.1 2.8 Z" fill="#111"/></svg>
<svg class="r" style="left:51px;top:369.0px;width:14px;height:14px" viewBox="0 0 14 14"><circle cx="7" cy="7" r="6.8" fill="#ffffff"/><path d="M3 14 Q3.8 10.8 7 10.6 Q10.2 10.8 11 14 Z" fill="#3a3a3a"/><ellipse cx="7" cy="6.8" rx="3" ry="3.8" fill="#c99b7c"/><path d="M3.8 6 Q3.4 1.8 7 1.8 Q10.6 1.8 10.2 6 Q9.4 3.4 7 3.5 Q4.6 3.4 3.8 6 Z" fill="#1c130e"/></svg>
<div class="t" style="top:371.00px;font-size:6.720px;line-height:10px;color:#505050;left:67.40px;transform:scaleX(0.8929);transform-origin:0 0;">Nelson Aslett</div>
<svg class="r" style="left:140px;top:369.5px;width:9px;height:12px" viewBox="0 0 9 12"><path d="M0.6 0.6 H8.4 V8.6 L5.8 11.4 H0.6 Z" fill="#fbfcfe" stroke="#a9bddb" stroke-width="0.8"/><path d="M5.8 11.4 V8.6 H8.4" fill="#dfe8f4" stroke="#a9bddb" stroke-width="0.7"/></svg>
<div class="t" style="top:371.00px;font-size:6.832px;line-height:10px;color:#505050;left:157.00px;width:55.44px;overflow:hidden;transform:scaleX(0.8929);transform-origin:0 0;">Packaging Dept. Mgr</div>
<div class="r" style="left:212.50px;top:373.50px;width:4.00px;height:4.00px;background:#1c9c1c;border-radius:50%;"></div>
<div class="t" style="top:371.00px;font-size:6.944px;line-height:10px;color:#505050;right:735.50px;text-align:right;transform:scaleX(0.8929);transform-origin:100% 0;">$51,000.00</div>
<div class="t" style="top:371.00px;font-size:7.000px;line-height:10px;color:#505050;left:268.80px;width:47.04px;overflow:hidden;transform:scaleX(0.8929);transform-origin:0 0;">Salaried(Non-...</div>
<div class="t" style="top:371.00px;font-size:6.944px;line-height:10px;color:#505050;left:313.70px;width:47.49px;overflow:hidden;transform:scaleX(0.8929);transform-origin:0 0;">13 Years, 10 Months</div>
<div class="r" style="left:358.50px;top:369.00px;width:70.50px;height:14.10px;background:linear-gradient(#fdfdfd,#ececec);box-sizing:border-box;border:1px solid #c5c5c5;border-radius:1.5px;"></div>
<div class="t" style="top:371.00px;font-size:6.944px;line-height:10px;color:#333;left:362.00px;transform:scaleX(0.8929);transform-origin:0 0;">Management II</div>
<svg class="r" style="left:419.3px;top:374.7px;width:5px;height:3.5px" viewBox="0 0 5 3.5"><path d="M0 0 H3.6 L1.8 2.4 Z" fill="#505050"/></svg>
<svg class="r" style="left:431px;top:371.3px;width:9px;height:9px" viewBox="0 0 9 9"><ellipse cx="4.4" cy="4.5" rx="3.3" ry="3.8" fill="#dce8f8" stroke="#5a88c8" stroke-width="0.9"/><path d="M3.1 3.3 Q3.1 1.9 4.4 1.9 Q5.8 1.9 5.8 3.2 Q5.8 4.1 4.5 4.6 V5.7" fill="none" stroke="#1d3f86" stroke-width="1.1"/><circle cx="4.5" cy="6.9" r="0.65" fill="#1d3f86"/></svg>
<div class="t" style="top:371.00px;font-size:6.776px;line-height:10px;color:#46679c;left:448.00px;transform:scaleX(0.8929);transform-origin:0 0;">2.54 Meets Expectations</div>
<div class="t" style="top:371.00px;font-size:6.944px;line-height:10px;color:#505050;right:428.40px;text-align:right;transform:scaleX(0.8929);transform-origin:100% 0;">$24.51923</div>
<div class="t" style="top:371.00px;font-size:6.944px;line-height:10px;color:#505050;right:381.00px;text-align:right;transform:scaleX(0.8929);transform-origin:100% 0;">102 %</div>
<div class="t" style="top:371.00px;font-size:6.944px;line-height:10px;color:#4b4bc4;right:335.50px;text-align:right;transform:scaleX(0.8929);transform-origin:100% 0;">$65,000</div>
<div class="t" style="top:371.00px;font-size:6.944px;line-height:10px;color:#505050;left:714.20px;transform:scaleX(0.8929);transform-origin:0 0;">Low</div>
<div class="t" style="top:371.00px;font-size:6.944px;line-height:10px;color:#505050;right:201.30px;text-align:right;transform:scaleX(0.8929);transform-origin:100% 0;">0 % - 3 %</div>
<div class="r" style="left:802.80px;top:369.70px;width:27.40px;height:13.00px;background:#fff;box-sizing:border-box;border:1px solid #d2d2d2;"></div>
<div class="t" style="top:369.00px;font-size:6.944px;line-height:10px;color:#333;right:171.60px;text-align:right;transform:scaleX(0.8929);transform-origin:100% 0;">1.50 %</div>
<svg class="r" style="left:837.4px;top:371.4px;width:9.2px;height:9.2px" viewBox="0 0 9.2 9.2"><circle cx="4.6" cy="4.6" r="4.5" fill="#1552b8"/><circle cx="4.6" cy="2.4" r="0.9" fill="#fff"/><rect x="3.8" y="3.8" width="1.6" height="3.8" fill="#fff"/></svg>
<div class="r" style="left:850.50px;top:369.40px;width:41.50px;height:13.60px;background:#fff;box-sizing:border-box;border:1px solid #d2d2d2;"></div>
<div class="t" style="top:369.00px;font-size:6.944px;line-height:10px;color:#333;right:110.00px;text-align:right;transform:scaleX(0.8929);transform-origin:100% 0;">$765.00</div>
<div class="t" style="top:371.00px;font-size:6.944px;line-height:10px;color:#505050;right:60.00px;text-align:right;transform:scaleX(0.8929);transform-origin:100% 0;">$0.36779</div>
<div class="t" style="top:371.00px;font-size:6.944px;line-height:10px;color:#505050;left:953.60px;width:32.03px;overflow:hidden;transform:scaleX(0.8929);transform-origin:0 0;">$51,000.00</div>
<div class="r" style="left:983.00px;top:291.50px;width:11.00px;height:317.50px;background:#f0f0f0;"></div>
<div class="r" style="left:994.00px;top:263.00px;width:1.00px;height:346.00px;background:#e6e6e6;"></div>
<svg class="r" style="left:987px;top:296.8px;width:5px;height:4px" viewBox="0 0 5 4"><path d="M0.5 3.2 L2.5 0.8 L4.5 3.2" fill="none" stroke="#8a8a8a" stroke-width="1.1"/></svg>
<div class="r" style="left:27.00px;top:383.50px;width:1.00px;height:225.50px;background:#dedede;"></div>
<div class="r" style="left:27.00px;top:607.80px;width:956.00px;height:1.00px;background:#dcdcdc;"></div>
<div class="t" style="top:397.00px;font-size:9.632px;line-height:12px;color:#3f6296;left:53.60px;transform:scaleX(0.8929);transform-origin:0 0;">Details</div>
<div class="t" style="top:397.00px;font-size:9.811px;line-height:12px;color:#555;left:98.60px;transform:scaleX(0.8929);transform-origin:0 0;">Compensation Summary</div>
<div class="t" style="top:397.00px;font-size:9.800px;line-height:12px;color:#555;left:213.50px;transform:scaleX(0.8929);transform-origin:0 0;">Performance Summary</div>
<div class="r" style="left:45.00px;top:411.80px;width:934.00px;height:1.00px;background:#e4e4e4;"></div>
<div class="r" style="left:45.00px;top:410.90px;width:44.00px;height:1.60px;background:#3d5a8c;"></div>
<div class="r" style="left:44.60px;top:421.00px;width:220.90px;height:169.80px;background:#fff;box-sizing:border-box;border:1px solid #e8e8e8;"></div>
<div class="r" style="left:45.60px;top:422.00px;width:218.90px;height:14.50px;background:#fafafa;"></div>
<div class="r" style="left:44.60px;top:436.40px;width:220.90px;height:1.10px;background:#ccdae4;"></div>
<div class="t" style="top:424.00px;font-size:7.840px;line-height:10px;color:#5874a2;left:54.30px;transform:scaleX(0.8929);transform-origin:0 0;">General</div>
<div class="r" style="left:282.60px;top:421.00px;width:220.70px;height:169.80px;background:#fff;box-sizing:border-box;border:1px solid #e8e8e8;"></div>
<div class="r" style="left:283.60px;top:422.00px;width:218.70px;height:14.50px;background:#fafafa;"></div>
<div class="r" style="left:282.60px;top:436.40px;width:220.70px;height:1.10px;background:#ccdae4;"></div>
<div class="t" style="top:424.00px;font-size:7.840px;line-height:10px;color:#5874a2;left:292.30px;transform:scaleX(0.8929);transform-origin:0 0;">Salary</div>
<div class="r" style="left:520.60px;top:421.00px;width:220.40px;height:169.80px;background:#fff;box-sizing:border-box;border:1px solid #e8e8e8;"></div>
<div class="r" style="left:521.60px;top:422.00px;width:218.40px;height:14.50px;background:#fafafa;"></div>
<div class="r" style="left:520.60px;top:436.40px;width:220.40px;height:1.10px;background:#ccdae4;"></div>
<div class="t" style="top:424.00px;font-size:7.840px;line-height:10px;color:#5874a2;left:530.30px;transform:scaleX(0.8929);transform-origin:0 0;">Compensation</div>
<div class="r" style="left:758.20px;top:421.00px;width:220.20px;height:169.80px;background:#fff;box-sizing:border-box;border:1px solid #e8e8e8;"></div>
<div class="r" style="left:759.20px;top:422.00px;width:218.20px;height:14.50px;background:#fafafa;"></div>
<div class="r" style="left:758.20px;top:436.40px;width:220.20px;height:1.10px;background:#ccdae4;"></div>
<div class="t" style="top:424.00px;font-size:7.840px;line-height:10px;color:#5874a2;left:767.90px;transform:scaleX(0.8929);transform-origin:0 0;">Key Information</div>
<div class="t" style="top:443.00px;font-size:7.728px;line-height:9.2px;color:#777;left:51.50px;transform:scaleX(0.8929);transform-origin:0 0;">Position</div>
<div class="t" style="top:443.00px;font-size:7.728px;line-height:10px;color:#555;left:101.40px;transform:scaleX(0.8929);transform-origin:0 0;">Packaging Dept. Mgr</div>
<div class="t" style="top:459.00px;font-size:7.728px;line-height:9.2px;color:#777;left:51.50px;transform:scaleX(0.8929);transform-origin:0 0;">Location</div>
<div class="t" style="top:459.00px;font-size:7.728px;line-height:10px;color:#555;left:101.40px;transform:scaleX(0.8929);transform-origin:0 0;">Plant 2 - Packaging</div>
<div class="t" style="top:474.00px;font-size:7.728px;line-height:9.2px;color:#777;left:51.50px;transform:scaleX(0.8929);transform-origin:0 0;">Manager</div>
<div class="t" style="top:474.00px;font-size:7.728px;line-height:10px;color:#555;left:101.40px;transform:scaleX(0.8929);transform-origin:0 0;">Ted Shoaff</div>
<div class="t" style="top:490.00px;font-size:7.728px;line-height:9.2px;color:#777;left:51.50px;transform:scaleX(0.8929);transform-origin:0 0;">Status</div>
<div class="t" style="top:490.00px;font-size:7.728px;line-height:10px;color:#555;left:101.40px;transform:scaleX(0.8929);transform-origin:0 0;">Active</div>
<div class="t" style="top:505.00px;font-size:7.728px;line-height:9.2px;color:#777;left:51.50px;transform:scaleX(0.8929);transform-origin:0 0;">Length of<br>Service</div>
<div class="t" style="top:505.00px;font-size:7.728px;line-height:10px;color:#555;left:101.40px;transform:scaleX(0.8929);transform-origin:0 0;">13 Years, 10 Months</div>
<div class="t" style="top:529.00px;font-size:7.728px;line-height:9.2px;color:#777;left:51.50px;transform:scaleX(0.8929);transform-origin:0 0;">Time In<br>Position</div>
<div class="t" style="top:529.00px;font-size:7.728px;line-height:10px;color:#555;left:101.40px;transform:scaleX(0.8929);transform-origin:0 0;">13 Years, 10 Months</div>
<div class="t" style="top:554.00px;font-size:7.728px;line-height:9.2px;color:#777;left:51.50px;transform:scaleX(0.8929);transform-origin:0 0;">Performance<br>Rating</div>
<div class="t" style="top:554.00px;font-size:7.728px;line-height:10px;color:#555;left:101.40px;transform:scaleX(0.8929);transform-origin:0 0;">2.54 Meets Expectations</div>
<div class="t" style="top:578.00px;font-size:7.728px;line-height:9.2px;color:#777;left:51.50px;transform:scaleX(0.8929);transform-origin:0 0;">Pay Grade</div>
<div class="t" style="top:578.00px;font-size:7.728px;line-height:10px;color:#555;left:101.40px;transform:scaleX(0.8929);transform-origin:0 0;">Dept Managers</div>
<div class="t" style="top:443.00px;font-size:7.784px;line-height:10px;color:#555;left:366.40px;width:60px;text-align:center;transform:scaleX(0.8929);transform-origin:50% 0;">Current</div>
<div class="t" style="top:452.00px;font-size:7.784px;line-height:10px;color:#555;left:366.40px;width:60px;text-align:center;transform:scaleX(0.8929);transform-origin:50% 0;">$51,000.00</div>
<div class="r" style="left:381.00px;top:461.00px;width:1.00px;height:13.50px;background:#62b7dc;"></div>
<div class="r" style="left:289.30px;top:471.20px;width:206.40px;height:6.90px;background:#e4e4e4;border-radius:3.5px;"></div>
<div class="r" style="left:289.30px;top:471.20px;width:94.20px;height:6.90px;background:#12b5ea;border-radius:3.5px;"></div>
<div class="r" style="left:375.30px;top:471.20px;width:1.00px;height:6.90px;background:#555;"></div>
<div class="t" style="top:479.00px;font-size:7.784px;line-height:10px;color:#666;left:289.50px;transform:scaleX(0.8929);transform-origin:0 0;">Min</div>
<div class="t" style="top:488.00px;font-size:7.784px;line-height:10px;color:#666;left:289.50px;transform:scaleX(0.8929);transform-origin:0 0;">$35,000.00</div>
<div class="t" style="top:479.00px;font-size:7.784px;line-height:10px;color:#666;left:346.00px;width:60px;text-align:center;transform:scaleX(0.8929);transform-origin:50% 0;">Mid</div>
<div class="t" style="top:488.00px;font-size:7.784px;line-height:10px;color:#666;left:346.00px;width:60px;text-align:center;transform:scaleX(0.8929);transform-origin:50% 0;">$50,000.00</div>
<div class="t" style="top:479.00px;font-size:7.784px;line-height:10px;color:#666;right:504.30px;text-align:right;transform:scaleX(0.8929);transform-origin:100% 0;">Max</div>
<div class="t" style="top:488.00px;font-size:7.784px;line-height:10px;color:#666;right:504.30px;text-align:right;transform:scaleX(0.8929);transform-origin:100% 0;">$70,000.00</div>
<div class="r" style="left:289.00px;top:510.00px;width:207.00px;height:1.00px;background:#ececec;"></div>
<div class="t" style="top:525.00px;font-size:7.795px;line-height:10px;color:#666;left:289.30px;transform:scaleX(0.8929);transform-origin:0 0;">Compa-Ratio</div>
<div class="t" style="top:525.00px;font-size:7.795px;line-height:10px;color:#555;right:504.30px;text-align:right;transform:scaleX(0.8929);transform-origin:100% 0;">102 %</div>
<div class="t" style="top:540.00px;font-size:7.795px;line-height:10px;color:#666;left:289.30px;transform:scaleX(0.8929);transform-origin:0 0;">Range Penetration</div>
<div class="t" style="top:540.00px;font-size:7.795px;line-height:10px;color:#555;right:504.30px;text-align:right;transform:scaleX(0.8929);transform-origin:100% 0;">46 %</div>
<div class="t" style="top:443.00px;font-size:7.616px;line-height:10px;color:#444;left:527.00px;transform:scaleX(0.8929);transform-origin:0 0;">Last Salary Increase</div>
<div class="r" style="left:527.00px;top:455.00px;width:206.00px;height:1.00px;background:#e8e8e8;"></div>
<div class="t" style="top:462.00px;font-size:7.728px;line-height:10px;color:#666;left:527.00px;transform:scaleX(0.8929);transform-origin:0 0;">Date</div>
<div class="t" style="top:462.00px;font-size:7.728px;line-height:10px;color:#555;right:266.70px;text-align:right;transform:scaleX(0.8929);transform-origin:100% 0;">1/1/2018</div>
<div class="t" style="top:477.00px;font-size:7.728px;line-height:10px;color:#666;left:527.00px;transform:scaleX(0.8929);transform-origin:0 0;">Amount</div>
<div class="t" style="top:477.00px;font-size:7.728px;line-height:10px;color:#555;left:619.70px;width:40px;text-align:center;transform:scaleX(0.8929);transform-origin:50% 0;">8.51 %</div>
<div class="t" style="top:477.00px;font-size:7.728px;line-height:10px;color:#555;right:266.70px;text-align:right;transform:scaleX(0.8929);transform-origin:100% 0;">$4,000.00</div>
<svg class="r" style="left:0;top:0;width:1000px;height:609px;pointer-events:none" viewBox="0 0 1000 609"><path d="M863.45 468.53 A33.8 33.8 0 0 1 900.20 502.20" fill="none" stroke="#e5e5e5" stroke-width="13.5"/><path d="M818.4 502.5 H916.4" stroke="#e6e6e6" stroke-width="0.7"/><path d="M828.42 500.87 A38.0 38.0 0 0 1 870.37 464.41" fill="none" stroke="#1bb1ec" stroke-width="5.4" stroke-linecap="round"/><path d="M825.4 502.2 H831.4" stroke="#fff" stroke-width="0"/><path d="M834.62 501.09 A31.8 31.8 0 0 1 865.29 470.42" fill="none" stroke="#f7bf3f" stroke-width="5" stroke-linecap="round"/><path d="M842.8 502.2 A23.6 23.6 0 0 1 890.0 502.2 Z" fill="#129a12"/><text x="839.17" y="499.87" font-size="4.4" text-anchor="middle" fill="#eeaa48" font-family="Liberation Sans">1</text><text x="846.95" y="484.25" font-size="4.4" text-anchor="middle" fill="#eeaa48" font-family="Liberation Sans">2</text><text x="866.40" y="476.20" font-size="4.4" text-anchor="middle" fill="#eeaa48" font-family="Liberation Sans">3</text><text x="885.85" y="484.25" font-size="4.4" text-anchor="middle" fill="#eeaa48" font-family="Liberation Sans">4</text><text x="893.63" y="499.87" font-size="4.4" text-anchor="middle" fill="#eeaa48" font-family="Liberation Sans">5</text><text x="866.4" y="490.7" font-size="5.8" text-anchor="middle" fill="#2a7a2a" font-family="Liberation Sans">13 Years</text><text x="866.4" y="497.7" font-size="4.2" text-anchor="middle" fill="#2a7a2a" font-family="Liberation Sans">Time In Position</text><path d="M869.6 456.7 h4 l-2 3 z" fill="#1bb1ec"/></svg>
<div class="t" style="top:442.00px;font-size:7.728px;line-height:10px;color:#a0a0a0;left:846.40px;width:40px;text-align:center;transform:scaleX(0.8929);transform-origin:50% 0;">100 %</div>
<div class="t" style="top:449.00px;font-size:7.600px;line-height:10px;color:#2aaae2;font-weight:700;letter-spacing:0.500px;left:851.50px;width:40px;text-align:center;">102&nbsp; %</div>
<div class="t" style="top:496.00px;font-size:7.728px;line-height:10px;color:#aaa;right:183.00px;text-align:right;transform:scaleX(0.8929);transform-origin:100% 0;">75 %</div>
<div class="t" style="top:496.00px;font-size:7.728px;line-height:10px;color:#aaa;left:917.00px;transform:scaleX(0.8929);transform-origin:0 0;">125 %</div>
<div class="r" style="left:825.60px;top:510.80px;width:17.20px;height:4.60px;background:#1bb1ec;border-radius:2.3px;"></div>
<div class="t" style="top:509.00px;font-size:7.728px;line-height:10px;color:#555;left:847.30px;transform:scaleX(0.8929);transform-origin:0 0;">Compa-Ratio</div>
<div class="r" style="left:825.60px;top:520.50px;width:17.20px;height:4.60px;background:#f7bf3f;border-radius:2.3px;"></div>
<div class="t" style="top:519.00px;font-size:7.728px;line-height:10px;color:#555;left:847.30px;transform:scaleX(0.8929);transform-origin:0 0;">Performance</div>
<div class="r" style="left:825.60px;top:530.20px;width:17.20px;height:4.60px;background:#129a12;border-radius:2.3px;"></div>
<div class="t" style="top:528.00px;font-size:7.728px;line-height:10px;color:#555;left:847.30px;transform:scaleX(0.8929);transform-origin:0 0;">Time In Position 10+</div>
<div class="r" style="left:788.00px;top:548.70px;width:161.00px;height:1.00px;background:#ececec;"></div>
<div class="t" style="top:556.00px;font-size:7.784px;line-height:10px;color:#666;left:765.00px;transform:scaleX(0.8929);transform-origin:0 0;">Attendance</div>
<div class="t" style="top:556.00px;font-size:7.784px;line-height:10px;color:#555;right:28.20px;text-align:right;transform:scaleX(0.8929);transform-origin:100% 0;">100 %</div>
<div class="t" style="top:571.00px;font-size:7.784px;line-height:10px;color:#666;left:765.00px;transform:scaleX(0.8929);transform-origin:0 0;">Unexplained Absences</div>
<div class="t" style="top:571.00px;font-size:7.784px;line-height:10px;color:#555;right:28.20px;text-align:right;transform:scaleX(0.8929);transform-origin:100% 0;">0</div>
</body></html>
